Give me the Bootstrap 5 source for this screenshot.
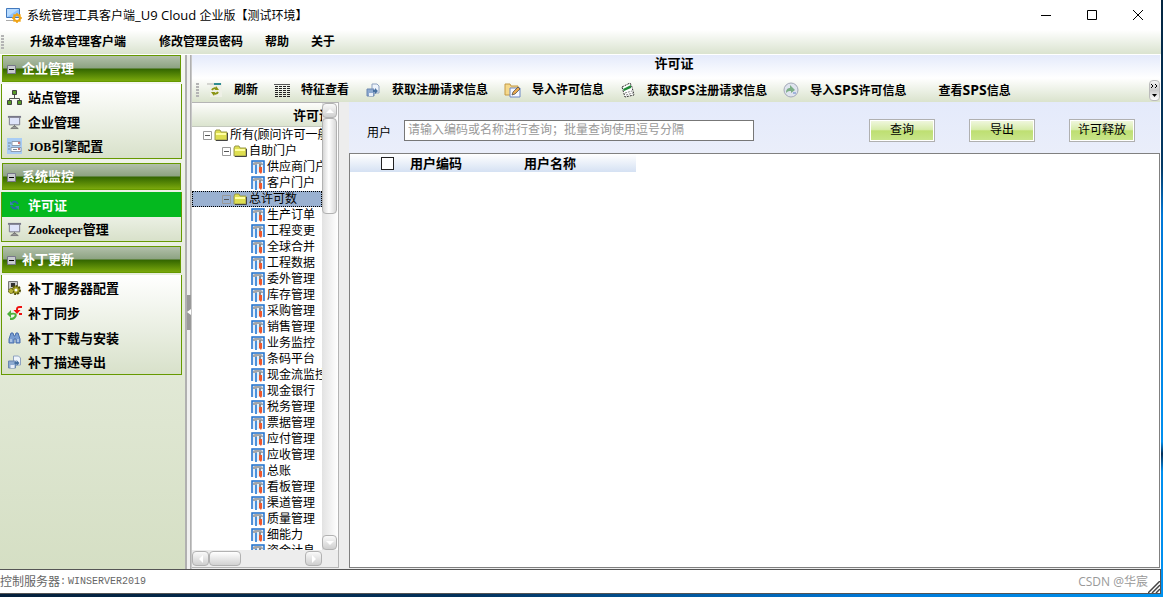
<!DOCTYPE html>
<html lang="zh-CN">
<head>
<meta charset="utf-8">
<meta name="viewport" content="width=device-width, initial-scale=1">
<title>系统管理工具客户端_U9 Cloud 企业版【测试环境】</title>
<link rel="stylesheet" href="https://cdn.jsdelivr.net/npm/bootstrap@5.3.0/dist/css/bootstrap.min.css">
<style>
:root { --leaf: #669900; --line: #808080; }
body { font: 12px/16px "Open Sans", "Noto Sans CJK SC", sans-serif; color: #000; padding: 0 2px 3px 0;
  background: linear-gradient(180deg, #04253f 0%, #043a66 28%, #0078d7 36%, #0090f0 74%, #04305a 76%, #0090f0 79%, #0090f0 100%); }
body::after { content: ""; position: fixed; left: 0; bottom: 0; width: 100%; height: 3px; z-index: -1;
  background: linear-gradient(90deg, #04203c 0%, #03325c 40%, #0078d7 75%, #0094f0 100%); }
button { font: inherit; color: inherit; background: none; border: 0; padding: 0; }
a { color: inherit; text-decoration: none; }
svg { display: block; flex: none; }
.win { background: #fff; }
.title-bar { height: 30px; padding: 0 17px 0 6px; }
.title-bar .app-name { margin-left: 5px; }
.title-bar .ver { font-size: 13px; }
.win-ctl { gap: 34px; }
.menu-bar { height: 24px; margin-bottom: 1px; background: linear-gradient(#fff, #dae3cf); font-weight: 700; }
.grip { width: 3px; height: 15px; margin-left: 1px; background: repeating-linear-gradient(#b4b4b4 0 2px, transparent 2px 3px); }
.menu-list { gap: 22px; margin-left: 26px; }
.menu-list .wide { margin-right: 11px; }
.side { width: 185px; padding: 0 3px 0 1px; background: linear-gradient(#f5f8f2, #d5dfc4); }
.group-head { height: 27px; margin: 0 1px 2px; padding: 0 4px 2px; gap: 6px; width: calc(100% - 2px);
  border: 1px solid var(--leaf); color: #fff; font-size: 13px; font-weight: 700;
  background: linear-gradient(#b2c0aa, #8da382 48%, #336600 52%, #7aa80c); }
.group-head svg { margin-top: 4px; }
.group-list { border: 1px solid var(--leaf); border-top: 0; background: linear-gradient(#fff, #d8e1ca); margin-bottom: 4px; }
.group-list a { height: 25px; padding: 0 5px; gap: 6px; font-size: 13px; font-weight: 700; }
.group-list li:last-child a { height: 24px; }
.group-list a.current { background: #04b91f; color: #fff; }
.latin { font-family: "Liberation Serif", serif; font-size: 12px; }
.splitter { width: 6px; border: 1px solid #b0b0b0; border-width: 0 1px 0 2px; background: #f0f0f0; }
.splitter i { width: 5px; height: 35px; background: #999; color: #fff; }
.page { border-left: 1px solid #c8c8c8; margin-right: 1px; }
.page-title { height: 23px; font-size: 13px; font-weight: 700; background: linear-gradient(#e4eafb, #fff); margin: 0; line-height: 16px; padding-right: 4px; }
.tools { height: 24px; background: linear-gradient(#fff, #dae3cd); font-weight: 700; padding-left: 3px; }
.tools button { gap: 11px; margin-right: 16px; white-space: nowrap; }
.tools .grip { margin-right: 8px; }
.tools .caps { font-size: 14px; line-height: 16px; }
.tools .more { margin-right: 0; width: 11px; height: 21px; border: 1px solid #bbb; border-radius: 4px; background: linear-gradient(#f4f4f4, #ccc, #fff); }
.work { background: #ededed; }
.tree-pane { width: 147px; border: 1px solid #b5b5b5; border-width: 1px 1px 1px 0; background: #fff; margin-bottom: 1px; }
.tree-head { height: 24px; padding-left: 101px; font-size: 13px; font-weight: 700; border-bottom: 1px solid #c4c9be; background: linear-gradient(#fdfdfb, #dbe4cf); }
.tree-head, .tree li { white-space: nowrap; overflow: hidden; }
.tree li { height: 16px; gap: 2px; padding-left: 59px; }
.tree .lv0 { padding-left: 11px; }
.tree .lv1 { padding-left: 30px; }
.tree .picked { background: #9ab1d1; outline: 1px dotted #000; outline-offset: -1px; }
.vbar { width: 16px; background: linear-gradient(90deg, #e2e2e2, #fff); }
.hbar { height: 17px; background: #ededed; }
.knob { border: 1px solid #b2b2b2; border-radius: 4px; background: linear-gradient(#fafafa, #cfcfcf); }
.vbar .knob { width: 15px; height: 15px; }
.vbar .thumb { height: 96px; background: linear-gradient(90deg, #d6d6d6, #fff 45%, #d8d8d8); }
.hbar .knob { width: 17px; height: 15px; }
.hbar .thumb { width: 32px; background: linear-gradient(#fff, #d2d2d2); }
.query { margin-left: 10px; }
.query form { height: 51px; padding: 6px 25px 0 18px; background: linear-gradient(#e4eafb, #eaeefa); }
.query input[type=text] { width: 350px; height: 21px; border: 1px solid #777; border-radius: 0; padding: 0 3px 2px; margin: 0 12px 0 13px; min-width: 0; line-height: 16px; }
.query input::placeholder { color: #999; }
.actions { gap: 34px; }
.actions button { width: 66px; height: 23px; border: 1px solid #b0b0b0; box-shadow: inset 0 0 0 1px #fff; padding-bottom: 2px;
  background: linear-gradient(#f2f8e2, #d8ecac 45%, #bedf72 52%, #c9e68c); }
.grid-box { border: 1px solid var(--line); background: #fff; margin-bottom: 1px; }
.grid-box table { width: 286px; table-layout: fixed; border-collapse: collapse; font-size: 13px; }
.grid-box thead { background: linear-gradient(#fff, #d5e1f3); }
.grid-box th { height: 18px; padding: 0 0 1px; line-height: 16px; }
.grid-box input { appearance: none; width: 13px; height: 13px; border: 1px solid #222; background: #fff; margin: 2px 0 0 31px; display: block; }
.status { height: 25px; border: 1px solid #555; border-width: 1px 1px 1px 0; color: #666; background: #fff; }
.status .mono { font: 10px/16px "Liberation Mono", monospace; gap: 2px; }
.sign { color: #999; }
</style>
</head>
<body class="vh-100 overflow-hidden">
<svg width="0" height="0" class="position-absolute" aria-hidden="true">
  <symbol id="i-folder" viewBox="0 0 14 12"><path d="M1 3l1-2h4l1 2h6v8H1z" fill="#dede50" stroke="#99994a"/><path d="M2 4h10v2H2z" fill="#ffffa0"/><path d="M2 11.500h11.500V4" fill="none" stroke="#444"/></symbol>
  <symbol id="i-minus" viewBox="0 0 9 9"><path d="M.5.5h8v8h-8z" fill="none" stroke="#999"/><path d="M2 4.500h5" stroke="#555"/></symbol>
  <symbol id="i-module" viewBox="0 0 14 14"><path d="M1 1h12v12H1z" fill="#e4eefa"/><path d="M1 13V1h12v12" fill="none" stroke="#1d6fcb" stroke-width="1.500"/><path d="M2 5V3l2-1h6l2 2v1H9L8 4H6v1z" fill="#a3a6aa"/><path d="M4 5h2v9H4z" fill="#4a92dc"/><path d="M8 4h2v4H8z" fill="#888"/><path d="M8 7h3v5l-1 2-2-2z" fill="#f0562a"/></symbol>
  <symbol id="i-screen" viewBox="0 0 16 16"><path d="M1 2.500h14" stroke="#778" stroke-width="2"/><path d="M2.500 3h11v8h-11z" fill="#dfe4fa" stroke="#778"/><path d="M8 11v2M4 15l4-3 4 3z" fill="#999" stroke="#777"/></symbol>
  <symbol id="i-export" viewBox="0 0 14 14"><path d="M6 1h5l2 2v7H6z" fill="#eef4fb" stroke="#8ea2c0"/><path d="M1 6h7v7H1z" fill="#8daad0" stroke="#6a86b0"/><path d="M3 10h4v3H3z" fill="#e8eef8"/><path d="M7 7h2V5l3 3-3 3V9H7z" fill="#456f9f"/></symbol>
</svg>

<div class="win h-100 d-flex flex-column">
  <header class="title-bar d-flex align-items-center flex-shrink-0">
    <svg width="16" height="16" viewBox="0 0 16 16"><path d="M.5 1.500h13v9H.5z" fill="#8cc2ff" stroke="#4279bd"/><path d="M1 2h12L1 10z" fill="#b9dcff"/><path d="M0 13.500h8" stroke="#aaa"/><circle cx="11" cy="11" r="3" fill="none" stroke="#f0a314" stroke-width="2"/><path d="M11 6v2M11 14v2M6 11h2M14 11h2M7.500 7.500L9 9M13 13l1.500 1.500M14.500 7.500L13 9M9 13l-1.500 1.500" stroke="#f0a314" stroke-width="1.500"/></svg>
    <span class="app-name flex-grow-1">系统管理工具客户端<span class="ver">_U9 Cloud </span>企业版【测试环境】</span>
    <div class="win-ctl d-flex">
      <button aria-label="最小化"><svg width="12" height="12" stroke="#000"><path d="M1 6.500h10"/></svg></button>
      <button aria-label="最大化"><svg width="12" height="12" stroke="#000" fill="none"><path d="M1.500 1.500h9v9h-9z"/></svg></button>
      <button aria-label="关闭"><svg width="12" height="12" stroke="#000"><path d="M1 1l10 10M11 1L1 11"/></svg></button>
    </div>
  </header>

  <nav class="menu-bar d-flex align-items-center flex-shrink-0">
    <span class="grip"></span>
    <div class="menu-list d-flex">
      <a href="#" class="wide">升级本管理客户端</a><a href="#">修改管理员密码</a><a href="#">帮助</a><a href="#">关于</a>
    </div>
  </nav>

  <div class="d-flex flex-grow-1 overflow-hidden">
    <aside class="side flex-shrink-0">
      <button class="group-head d-flex align-items-center"><svg width="9" height="9"><path d="M.5.500h8v8h-8z" fill="#c8ccd0" stroke="#778"/><path d="M2 4.500h5" stroke="#000"/></svg>企业管理</button>
      <ul class="group-list list-unstyled">
        <li><a href="#" class="d-flex align-items-center"><svg width="15" height="16" viewBox="0 0 15 16"><path d="M7.500 6v4M2.500 12V9.500h10V12" fill="none" stroke="#555"/><g fill="#589a28" stroke="#444"><path d="M5.500 1.500h4v4h-4zM.5 11.500h4v4h-4zM10.500 11.500h4v4h-4z"/></g></svg>站点管理</a></li>
        <li><a href="#" class="d-flex align-items-center"><svg width="15" height="16"><use href="#i-screen"/></svg>企业管理</a></li>
        <li><a href="#" class="d-flex align-items-center"><svg width="15" height="16" viewBox="0 0 15 16"><path d="M0 0h15v16H0z" fill="#a9cdf5"/><path d="M5 3.500h8v4H5zM4 9.500h10v4H4z" fill="#fff" stroke="#8d9cb0"/><path d="M1 5h3M1 8h2M1 11h2M6 11.500h4" stroke="#789"/><path d="M11 4h2v2h-2zM11 10h2v2h-2z" fill="#c77"/></svg><span><span class="latin">JOB</span>引擎配置</span></a></li>
      </ul>
      <button class="group-head d-flex align-items-center"><svg width="9" height="9"><path d="M.5.500h8v8h-8z" fill="#c8ccd0" stroke="#778"/><path d="M2 4.500h5" stroke="#000"/></svg>系统监控</button>
      <ul class="group-list list-unstyled">
        <li><a href="#" class="current d-flex align-items-center" aria-current="page"><svg width="15" height="14" viewBox="0 0 15 14" fill="none" stroke="#2270a0" stroke-width="2"><path d="M11 6c-2-3-4-3-6-1M4 8c2 3 4 3 6 2"/><path d="M3 3v4h4zM12 12V8H8z" fill="#3a86a8" stroke="none"/></svg>许可证</a></li>
        <li><a href="#" class="d-flex align-items-center"><svg width="15" height="16"><use href="#i-screen"/></svg><span><span class="latin">Zookeeper</span>管理</span></a></li>
      </ul>
      <button class="group-head d-flex align-items-center"><svg width="9" height="9"><path d="M.5.500h8v8h-8z" fill="#c8ccd0" stroke="#778"/><path d="M2 4.500h5" stroke="#000"/></svg>补丁更新</button>
      <ul class="group-list list-unstyled">
        <li><a href="#" class="d-flex align-items-center"><svg width="15" height="16" viewBox="0 0 15 16"><path d="M1.500 1.500h9v9h-9z" fill="#ccc" stroke="#777"/><path d="M4 3h4v4H4z" fill="#333"/><circle cx="9" cy="10" r="4" fill="#a3a020" stroke="#55540f" stroke-width="2" stroke-dasharray="2 1"/><circle cx="9" cy="10" r="1.500" fill="#fff"/><circle cx="4" cy="11" r="2.500" fill="#b7b43a" stroke="#55540f" stroke-dasharray="2 1"/></svg>补丁服务器配置</a></li>
        <li><a href="#" class="d-flex align-items-center"><svg width="15" height="16" viewBox="0 0 15 16" fill="none" stroke-width="2"><path d="M15 2h-2c-3 0-3 1-3 3" stroke="#e11"/><path d="M6.500 5h7L10 9z" fill="#e11"/><path d="M12 9h3" stroke="#e11"/><path d="M3 9c5-1 7 0 5 3-1 2-3 2-5 2" stroke="#4caf3c"/><path d="M0 9l4-4v8z" fill="#4caf3c"/></svg>补丁同步</a></li>
        <li><a href="#" class="d-flex align-items-center"><svg width="15" height="14" viewBox="0 0 15 14"><path d="M4 2h2l1 3h1l1-3h2l2 6v4H9V8H7v4H2V8z" fill="#7a9ed2" stroke="#4a6fac"/><path d="M4 8v3M11 8v3" stroke="#dce8f8"/></svg>补丁下载与安装</a></li>
        <li><a href="#" class="d-flex align-items-center"><svg width="15" height="14"><use href="#i-export"/></svg>补丁描述导出</a></li>
      </ul>
    </aside>

    <div class="splitter d-flex align-items-center justify-content-center flex-shrink-0"><i class="d-flex align-items-center"><svg width="4" height="6" fill="#fff"><path d="M4 0v6L0 3z"/></svg></i></div>

    <main class="page flex-grow-1 d-flex flex-column overflow-hidden">
      <h1 class="page-title text-center flex-shrink-0">许可证</h1>
      <div class="tools d-flex align-items-center flex-shrink-0">
        <span class="grip"></span>
        <button class="d-flex align-items-center"><svg width="16" height="16" viewBox="0 0 16 16"><path d="M0 1h15v14H3V3H0z" fill="#eef0e6"/><path d="M0 2h8" stroke="#bbb"/><path d="M7 2h7" stroke="#2d8b92" stroke-width="2"/><path d="M5 8c1-2 3-2 5-1M11 10c-1 2-3 2-5 1" fill="none" stroke="#8a9414" stroke-width="2"/><path d="M9 4l3 4H8zM7 14l-3-4h4z" fill="#8a9414"/></svg>刷新</button>
        <button class="d-flex align-items-center"><svg width="16" height="14" viewBox="0 0 16 14"><path d="M0 1.500h16" stroke="#555"/><path d="M2.500 3v11M6.500 3v11M10.500 3v11M14.500 3v11" stroke="#222" stroke-width="3" stroke-dasharray="1 1"/></svg>特征查看</button>
        <button class="d-flex align-items-center"><svg width="16" height="14"><use href="#i-export"/></svg>获取注册请求信息</button>
        <button class="d-flex align-items-center"><svg width="17" height="16" viewBox="0 0 17 16"><path d="M1 2h5l1 2h7v9H1z" fill="#f5d98c" stroke="#c49a45"/><path d="M6 6h10v9H6z" fill="#f5f8ff" stroke="#6d87c5"/><path d="M8 13l1-3 5-5 2 2-5 5z" fill="#e9a84d" stroke="#444" stroke-width=".7"/></svg>导入许可信息</button>
        <button class="d-flex align-items-center"><svg width="16" height="16" viewBox="0 0 16 16"><path d="M2 5l8-4 2 4 2 8-9 2z" fill="#fff" stroke="#333" stroke-dasharray="2 1"/><path d="M3 7l8-4v3L4 9z" fill="#218b38"/><path d="M5 11l7-2M6 13l7-2" stroke="#888" stroke-dasharray="2 1"/></svg><span>获取<span class="caps">SPS</span>注册请求信息</span></button>
        <button class="d-flex align-items-center"><svg width="16" height="16" viewBox="0 0 16 16"><circle cx="8" cy="8" r="7" fill="#dfe4ee" stroke="#a4a9b8"/><path d="M3 11c0-4 2-5 4-5V3l5 5-4 3V9c-2 0-3 0-5 2z" fill="#7cae86"/><path d="M10 10h3v2h-3z" fill="#a0b4dc"/></svg><span>导入<span class="caps">SPS</span>许可信息</span></button>
        <button class="ms-3">查看<span class="caps">SPS</span>信息</button>
        <button class="more ms-auto" aria-label="更多"><svg width="9" height="19" fill="none" stroke="#000"><path d="M1 3l2 2-2 2M5 3l2 2-2 2"/><path d="M2 13h5l-2.500 3z" fill="#000" stroke="none"/></svg></button>
      </div>

      <div class="work d-flex flex-grow-1 overflow-hidden">
        <section class="tree-pane d-flex flex-column flex-shrink-0">
          <div class="d-flex flex-grow-1 overflow-hidden">
            <div class="flex-grow-1 overflow-hidden">
              <div class="tree-head d-flex align-items-center">许可证</div>
              <ul class="tree list-unstyled mb-0" id="tree"></ul>
            </div>
            <div class="vbar d-flex flex-column flex-shrink-0">
              <button class="knob d-flex align-items-center justify-content-center" aria-label="上"><svg width="8" height="4" fill="#fff"><path d="M0 4h8L4 0z"/></svg></button>
              <span class="knob thumb"></span>
              <button class="knob mt-auto d-flex align-items-center justify-content-center" aria-label="下"><svg width="8" height="4" fill="#fff"><path d="M0 0h8L4 4z"/></svg></button>
            </div>
          </div>
          <div class="hbar d-flex flex-shrink-0 pe-3 align-items-center">
            <button class="knob d-flex align-items-center justify-content-center" aria-label="左"><svg width="4" height="8" fill="#fff"><path d="M4 0v8L0 4z"/></svg></button>
            <span class="knob thumb"></span>
            <button class="knob ms-auto d-flex align-items-center justify-content-center" aria-label="右"><svg width="4" height="8" fill="#fff"><path d="M0 0v8l4-4z"/></svg></button>
          </div>
        </section>

        <section class="query flex-grow-1 d-flex flex-column">
          <form class="d-flex align-items-center flex-shrink-0">
            <label for="user" class="flex-shrink-0 pt-1">用户</label>
            <input type="text" id="user" placeholder="请输入编码或名称进行查询；批量查询使用逗号分隔">
            <div class="actions d-flex ms-auto">
              <button type="button">查询</button><button type="button">导出</button><button type="button">许可释放</button>
            </div>
          </form>
          <div class="grid-box flex-grow-1">
            <table>
              <colgroup><col style="width:60px"><col style="width:114px"><col></colgroup>
              <thead><tr><th><input type="checkbox" aria-label="全选"></th><th>用户编码</th><th>用户名称</th></tr></thead>
            </table>
          </div>
        </section>
      </div>
    </main>
  </div>

  <footer class="status d-flex align-items-center flex-shrink-0">
    <span>控制服务器</span><span class="mono flex-grow-1 d-flex"><span>:</span><span>WINSERVER2019</span></span>
    <span class="sign">CSDN @华宸</span>
    <svg width="12" height="12" class="align-self-end" stroke="#444" stroke-width="1.500"><path d="M0 12L12 0M4 12l8-8M8 12l4-4"/></svg>
  </footer>
</div>

<script>
const nodes = [[0, '所有(顾问许可一般)'], [1, '自助门户'], [2, '供应商门户'], [2, '客户门户'], [1, '总许可数']];
'生产订单 工程变更 全球合并 工程数据 委外管理 库存管理 采购管理 销售管理 业务监控 条码平台 现金流监控 现金银行 税务管理 票据管理 应付管理 应收管理 总账 看板管理 渠道管理 质量管理 细能力 资金计息'
  .split(' ').forEach(name => nodes.push([2, name]));
document.getElementById('tree').innerHTML = nodes.map(([level, name]) => {
  const icon = level < 2
    ? '<svg width="9" height="9"><use href="#i-minus"/></svg><svg width="14" height="12"><use href="#i-folder"/></svg>'
    : '<svg width="14" height="14"><use href="#i-module"/></svg>';
  const picked = name === '总许可数' ? ' picked' : '';
  return `<li class="d-flex align-items-center lv${level}${picked}">${icon}<span>${name}</span></li>`;
}).join('');
</script>
<script src="https://cdn.jsdelivr.net/npm/bootstrap@5.3.0/dist/js/bootstrap.bundle.min.js"></script>
</body>
</html>
